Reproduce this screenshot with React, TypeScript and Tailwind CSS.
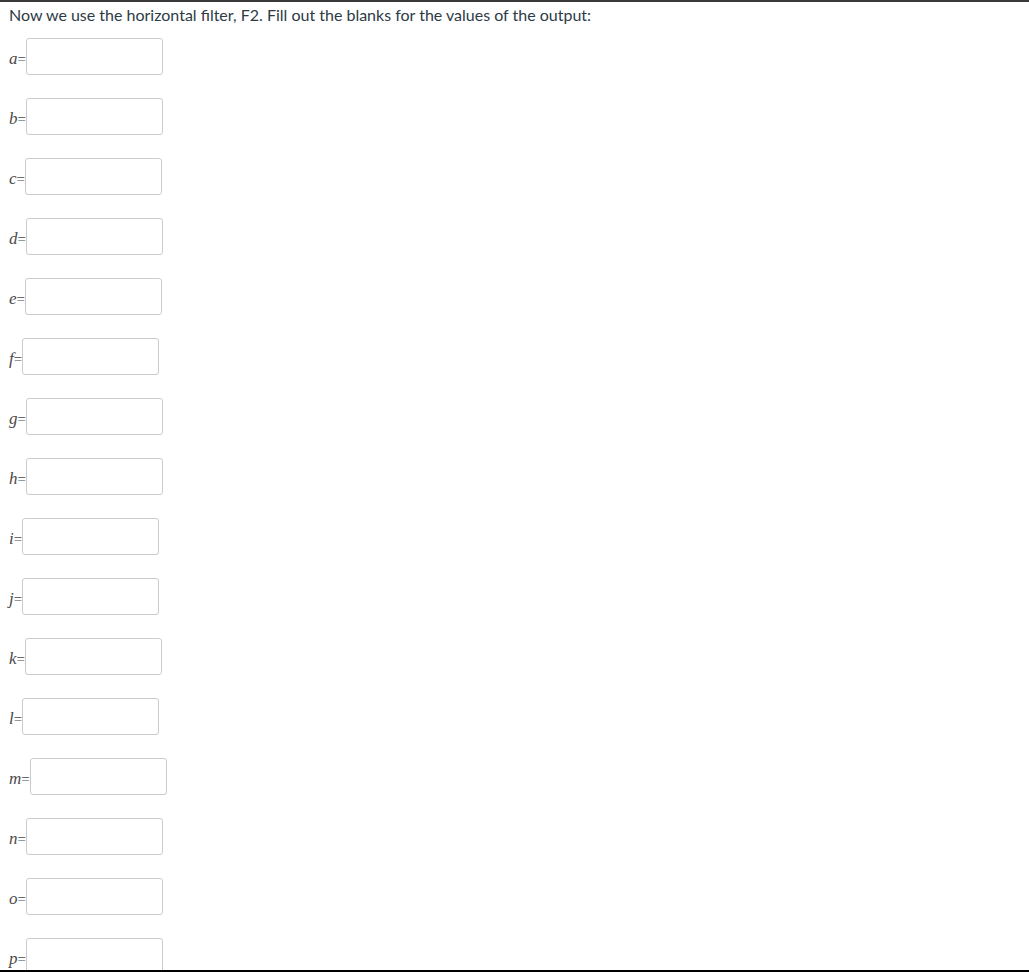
const labels = ["a", "b", "c", "d", "e", "f", "g", "h", "i", "j", "k", "l", "m", "n", "o", "p"];

function BlankRow({ name }: { name: string }) {
  return (
    <div className="flex items-end">
      <span
        className="mb-[8px] text-[17px] italic leading-none text-[#4a4a4a]"
        style={{ fontFamily: '"Liberation Serif", serif' }}
      >
        {name}
        <span className="not-italic text-[15px]">=</span>
      </span>
      <input
        type="text"
        aria-label={name}
        className="h-[37px] w-[137px] rounded-[3px] border border-[#cbcbcb] bg-white outline-none"
      />
    </div>
  );
}

export default function App() {
  return (
    <div
      className="box-border h-[972px] overflow-hidden border-t-2 border-b-2 border-t-[#3a3a3a] border-b-black bg-white text-[#2d3b45]"
      style={{ fontFamily: 'Lato, "Noto Sans", sans-serif' }}
    >
      <div className="px-[9px] pt-[3px]">
        <p className="text-[16px] leading-[20px] text-[#2d3b45]">
          Now we use the horizontal filter, F2. Fill out the blanks for the values of the output:
        </p>
        <div className="mt-[13px] flex flex-col gap-[23px]">
          {labels.map((l) => (
            <BlankRow key={l} name={l} />
          ))}
        </div>
      </div>
    </div>
  );
}
